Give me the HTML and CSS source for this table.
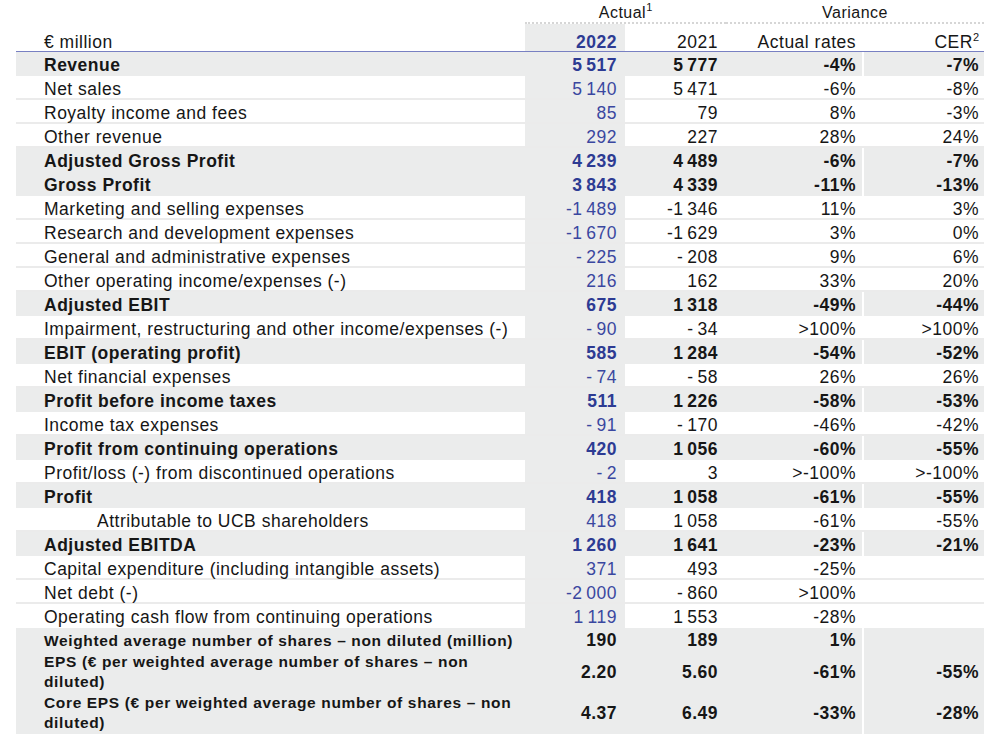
FILE: index.html
```html
<!DOCTYPE html>
<html>
<head>
<meta charset="utf-8">
<link rel="stylesheet" href="styles.css">
</head>
<body>
<table class="fin">
  <colgroup>
    <col class="c-label"><col class="c-22"><col class="c-21"><col class="c-ar"><col class="c-cer">
  </colgroup>
  <thead>
    <tr class="h1">
      <th class="blank"></th>
      <th colspan="2" class="grp">Actual<sup>1</sup></th>
      <th colspan="2" class="grp">Variance</th>
    </tr>
    <tr class="h2">
      <th class="lbl">€ million</th>
      <th class="num y22">2022</th>
      <th class="num">2021</th>
      <th class="num ar">Actual rates</th>
      <th class="num cer">CER<sup>2</sup></th>
    </tr>
  </thead>
  <tbody>
    <tr class="b"><td class="lbl">Revenue</td><td class="y22">5 517</td><td>5 777</td><td class="ar">-4%</td><td class="cer">-7%</td></tr>
    <tr class="w"><td class="lbl">Net sales</td><td class="y22">5 140</td><td>5 471</td><td class="ar">-6%</td><td class="cer">-8%</td></tr>
    <tr class="w"><td class="lbl">Royalty income and fees</td><td class="y22">85</td><td>79</td><td class="ar">8%</td><td class="cer">-3%</td></tr>
    <tr class="w"><td class="lbl">Other revenue</td><td class="y22">292</td><td>227</td><td class="ar">28%</td><td class="cer">24%</td></tr>
    <tr class="b"><td class="lbl">Adjusted Gross Profit</td><td class="y22">4 239</td><td>4 489</td><td class="ar">-6%</td><td class="cer">-7%</td></tr>
    <tr class="b"><td class="lbl">Gross Profit</td><td class="y22">3 843</td><td>4 339</td><td class="ar">-11%</td><td class="cer">-13%</td></tr>
    <tr class="w"><td class="lbl">Marketing and selling expenses</td><td class="y22">-1 489</td><td>-1 346</td><td class="ar">11%</td><td class="cer">3%</td></tr>
    <tr class="w"><td class="lbl">Research and development expenses</td><td class="y22">-1 670</td><td>-1 629</td><td class="ar">3%</td><td class="cer">0%</td></tr>
    <tr class="w"><td class="lbl">General and administrative expenses</td><td class="y22">- 225</td><td>- 208</td><td class="ar">9%</td><td class="cer">6%</td></tr>
    <tr class="w"><td class="lbl">Other operating income/expenses (-)</td><td class="y22">216</td><td>162</td><td class="ar">33%</td><td class="cer">20%</td></tr>
    <tr class="b"><td class="lbl">Adjusted EBIT</td><td class="y22">675</td><td>1 318</td><td class="ar">-49%</td><td class="cer">-44%</td></tr>
    <tr class="w"><td class="lbl">Impairment, restructuring and other income/expenses (-)</td><td class="y22">- 90</td><td>- 34</td><td class="ar">&gt;100%</td><td class="cer">&gt;100%</td></tr>
    <tr class="b"><td class="lbl">EBIT (operating profit)</td><td class="y22">585</td><td>1 284</td><td class="ar">-54%</td><td class="cer">-52%</td></tr>
    <tr class="w"><td class="lbl">Net financial expenses</td><td class="y22">- 74</td><td>- 58</td><td class="ar">26%</td><td class="cer">26%</td></tr>
    <tr class="b"><td class="lbl">Profit before income taxes</td><td class="y22">511</td><td>1 226</td><td class="ar">-58%</td><td class="cer">-53%</td></tr>
    <tr class="w"><td class="lbl">Income tax expenses</td><td class="y22">- 91</td><td>- 170</td><td class="ar">-46%</td><td class="cer">-42%</td></tr>
    <tr class="b"><td class="lbl">Profit from continuing operations</td><td class="y22">420</td><td>1 056</td><td class="ar">-60%</td><td class="cer">-55%</td></tr>
    <tr class="w"><td class="lbl">Profit/loss (-) from discontinued operations</td><td class="y22">- 2</td><td>3</td><td class="ar">&gt;-100%</td><td class="cer">&gt;-100%</td></tr>
    <tr class="b"><td class="lbl">Profit</td><td class="y22">418</td><td>1 058</td><td class="ar">-61%</td><td class="cer">-55%</td></tr>
    <tr class="w"><td class="lbl ind">Attributable to UCB shareholders</td><td class="y22">418</td><td>1 058</td><td class="ar">-61%</td><td class="cer">-55%</td></tr>
    <tr class="b"><td class="lbl">Adjusted EBITDA</td><td class="y22">1 260</td><td>1 641</td><td class="ar">-23%</td><td class="cer">-21%</td></tr>
    <tr class="w"><td class="lbl">Capital expenditure (including intangible assets)</td><td class="y22">371</td><td>493</td><td class="ar">-25%</td><td class="cer"></td></tr>
    <tr class="w"><td class="lbl">Net debt (-)</td><td class="y22">-2 000</td><td>- 860</td><td class="ar">&gt;100%</td><td class="cer"></td></tr>
    <tr class="w last"><td class="lbl">Operating cash flow from continuing operations</td><td class="y22">1 119</td><td>1 553</td><td class="ar">-28%</td><td class="cer"></td></tr>
    <tr class="b s r1"><td class="lbl">Weighted average number of shares – non diluted (million)</td><td class="y22">190</td><td>189</td><td class="ar">1%</td><td class="cer"></td></tr>
    <tr class="b s r2"><td class="lbl">EPS (€ per weighted average number of shares – non diluted)</td><td class="y22">2.20</td><td>5.60</td><td class="ar">-61%</td><td class="cer">-55%</td></tr>
    <tr class="b s r3"><td class="lbl">Core EPS (€ per weighted average number of shares – non diluted)</td><td class="y22">4.37</td><td>6.49</td><td class="ar">-33%</td><td class="cer">-28%</td></tr>
  </tbody>
</table>
</body>
</html>
```
FILE: styles.css
```css
html, body {
  margin: 0;
  padding: 0;
  background: #ffffff;
}
body {
  font-family: "Liberation Sans", Arial, sans-serif;
  color: #161616;
}
.fin {
  margin-left: 16px;
  border-collapse: separate;
  border-spacing: 0;
  table-layout: fixed;
  width: 968px;
  font-size: 17.5px;
  letter-spacing: 0.5px;
}
.c-label { width: 509px; }
.c-22 { width: 100px; }
.c-21 { width: 101px; }
.c-ar { width: 136px; }
.c-cer { width: 122px; }

th, td {
  padding: 0;
  font-weight: normal;
  white-space: nowrap;
}
sup {
  font-size: 11px;
  line-height: 0;
  vertical-align: 7px;
  letter-spacing: 0;
}

/* header row 1 */
.h1 th {
  padding-top: 3px;
  line-height: 19px;
  text-align: center;
  vertical-align: top;
  font-size: 16px;
  letter-spacing: 0.5px;
}
.h1 th.grp {
  border-bottom: 2px dotted #d6d6d6;
}
.h1 th.blank { padding-bottom: 2px; }

/* header row 2 */
.h2 th {
  padding-top: 10px;
  line-height: 17px;
  vertical-align: top;
  border-bottom: 1px solid #7880c2;
}
.h2 th.lbl {
  text-align: left;
  padding-left: 28px;
}
.h2 th.num {
  text-align: right;
  padding-right: 8px;
}
.h2 th.ar { padding-right: 6px; }
.h2 th.cer { padding-right: 5px; }
.h2 th.y22 {
  background: #ebecec;
  color: #2d3b93;
  font-weight: bold;
}

/* body */
tbody td {
  padding-top: 3px;
  line-height: 21px;
  text-align: right;
  padding-right: 8px;
  vertical-align: middle;
  word-spacing: -1.5px;
}
tbody td.lbl {
  text-align: left;
  padding-left: 28px;
  padding-right: 0;
  word-spacing: 0;
}
tbody td.lbl.ind { padding-left: 81px; }
tbody td.ar { padding-right: 6px; }
tbody td.cer { padding-right: 5px; }
tbody td.y22 {
  background: #ebecec;
  color: #3a47a0;
}
tr.w td {
  box-shadow: inset 0 -2px 0 #ebebeb;
}
tr.w.last td { box-shadow: none; }
tr.b td {
  background: #ebecec;
  font-weight: bold;
}
tr.b td.cer {
  box-shadow: inset 2px 0 0 #ffffff;
}
tr.b td.y22 { color: #2d3b93; }

/* share / EPS rows */
tr.s td {
  padding-top: 0;
  line-height: 20px;
}
tr.s td.lbl {
  font-size: 15.5px;
  letter-spacing: 0.65px;
  white-space: normal;
}
tr.s td.y22 { color: #161616; }
tr.r1 td { line-height: 24px; }
tr.r1 td.lbl {
  white-space: nowrap;
  padding-top: 2px;
  line-height: 22px;
}
tr.r3 td.lbl {
  padding-top: 1px;
  padding-bottom: 1px;
}
```
